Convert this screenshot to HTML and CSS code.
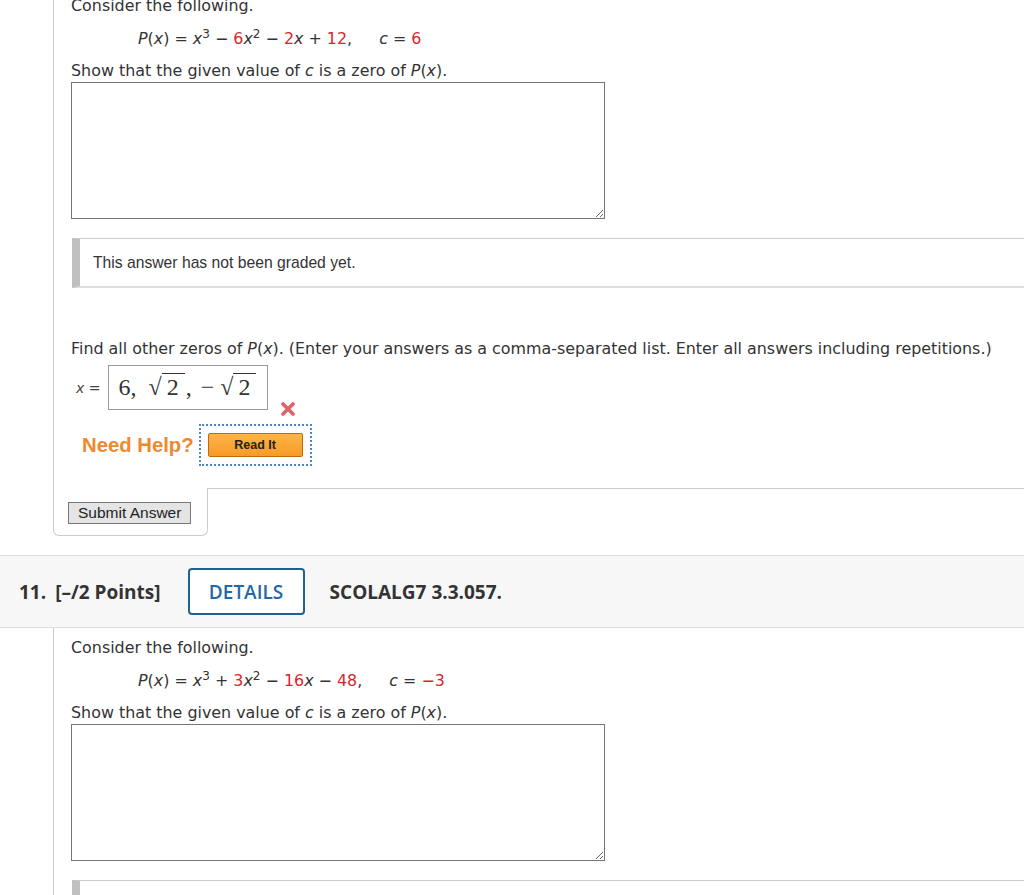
FILE: index.html
```html
<!DOCTYPE html>
<html lang="en">
<head>
    <meta charset="UTF-8">
    <meta name="viewport" content="width=device-width, initial-scale=1.0">
    <title>WebAssign</title>
    <link rel="stylesheet" href="styles.css">
</head>
<body>

    <div class="page">
        <div class="qbody top">
            <p class="intro">Consider the following.</p>
            <p class="eq"><i>P</i>(<i>x</i>) = <i>x</i><sup>3</sup> &minus; <span class="red">6</span><i>x</i><sup>2</sup> &minus; <span class="red">2</span><i>x</i> + <span class="red">12</span>,<span class="cval"><i>c</i> = <span class="red">6</span></span></p>
            <p class="prompt">Show that the given value of <i>c</i> is a zero of <i>P</i>(<i>x</i>).</p>
            <textarea class="work"></textarea>
            <div class="graded">This answer has not been graded yet.</div>

            <p class="prompt find">Find all other zeros of <i>P</i>(<i>x</i>). (Enter your answers as a comma-separated list. Enter all answers including repetitions.)</p>
            <div class="answer-row">
                <span class="xeq"><i>x</i> =</span>
                <span class="mathbox"><span>6,</span><span class="rad">&radic;<span class="under">2</span></span><span class="comma">,</span><span class="neg">&minus;</span><span class="rad">&radic;<span class="under">2</span></span></span>
                <svg class="wrong" width="14" height="14" viewBox="0 0 14 14">
                    <path d="M2 2 L12 12 M12 2 L2 12" stroke="#e5606a" stroke-width="3.6" stroke-linecap="round"/>
                </svg>
            </div>
            <div class="help">
                <span class="need">Need Help?</span>
                <span class="readit-wrap"><button class="readit" type="button">Read It</button></span>
            </div>
        </div>

        <div class="submit-row">
            <div class="submit-cell"><button class="submit" type="button">Submit Answer</button></div>
            <div class="submit-fill"></div>
        </div>

        <div class="qhead">
            <span class="qnum">11.</span>
            <span class="pts">[&ndash;/2 Points]</span>
            <button class="details" type="button">DETAILS</button>
            <span class="code">SCOLALG7 3.3.057.</span>
        </div>

        <div class="qbody second">
            <p class="intro">Consider the following.</p>
            <p class="eq"><i>P</i>(<i>x</i>) = <i>x</i><sup>3</sup> + <span class="red">3</span><i>x</i><sup>2</sup> &minus; <span class="red">16</span><i>x</i> &minus; <span class="red">48</span>,<span class="cval"><i>c</i> = <span class="red">&minus;3</span></span></p>
            <p class="prompt">Show that the given value of <i>c</i> is a zero of <i>P</i>(<i>x</i>).</p>
            <textarea class="work"></textarea>
            <div class="graded"></div>
        </div>
    </div>

</body>
</html>
```

FILE: styles.css
```css
body {
    margin: 0;
    background-color: white;
    color: #333;
    font-family: "DejaVu Sans", Verdana, sans-serif;
    font-size: 15.9px;
}
.page {
    margin-top: -14px;
}
p {
    margin: 0;
}
.red {
    color: #d9262b;
}
.qbody {
    margin-left: 53px;
    border-left: 1px solid #ccc;
    padding-left: 17px;
    padding-top: 10px;
}
.qbody.top {
    padding-bottom: 22px;
}
.intro {
    line-height: 20px;
}
.eq {
    margin-top: 13px;
    margin-left: 67px;
    line-height: 20px;
}
.eq sup {
    font-size: 12px;
    line-height: 0;
}
.cval {
    margin-left: 27px;
}
.prompt {
    margin-top: 12px;
    line-height: 20px;
}
.work {
    display: block;
    width: 534px;
    height: 137px;
    box-sizing: border-box;
    margin-top: 1px;
    border: 1px solid #767676;
    resize: both;
}
.graded {
    margin-top: 19px;
    margin-left: 1px;
    height: 47px;
    border-left: 8px solid #c0c0c0;
    border-top: 1px solid #ccc;
    border-bottom: 2px solid #ddd;
    padding-left: 13px;
    display: flex;
    align-items: center;
    font-family: "Liberation Sans", Arial, sans-serif;
    font-size: 15.7px;
    color: #333;
}
.find {
    margin-top: 51px;
}
.answer-row {
    display: flex;
    align-items: center;
    margin-top: 6px;
}
.xeq {
    margin-left: 5px;
    margin-right: 8px;
    font-size: 14px;
    color: #444;
}
.mathbox {
    width: 160px;
    height: 45px;
    box-sizing: border-box;
    border: 1px solid #999;
    padding-left: 9px;
    display: flex;
    align-items: center;
    font-family: "Liberation Serif", "Times New Roman", serif;
    font-size: 24px;
    color: #333;
    white-space: pre;
}
.rad {
    margin-left: 12px;
}
.under {
    border-top: 1px solid #333;
    padding: 0 6px 0 5px;
}
.comma {
    margin-left: 1px;
}
.neg {
    margin-left: 9px;
}
.neg + .rad {
    margin-left: 6px;
}
.wrong {
    align-self: flex-end;
    margin-left: 13px;
    margin-bottom: -6px;
}
.help {
    display: flex;
    align-items: center;
    margin-top: 14px;
    margin-left: 11px;
}
.need {
    font-family: "Liberation Sans", Arial, sans-serif;
    font-weight: bold;
    font-size: 20.3px;
    color: #f0892e;
    margin-right: 5px;
}
.readit-wrap {
    border: 2px dotted #4f86c0;
    padding: 7px 7px;
}
.readit {
    display: block;
    width: 95px;
    height: 24px;
    background: linear-gradient(#fcb54a, #f79a26);
    border: 1px solid #c06a0c;
    border-radius: 2px;
    font-family: "Liberation Sans", Arial, sans-serif;
    font-weight: bold;
    font-size: 12.5px;
    color: #222;
    padding: 0;
}
.submit-row {
    display: flex;
}
.submit-cell {
    margin-left: 53px;
    width: 155px;
    height: 48px;
    border: 1px solid #ccc;
    border-top: none;
    border-radius: 0 0 6px 6px;
    padding: 14px 0 0 14px;
    box-sizing: border-box;
}
.submit-fill {
    flex: 1;
    border-top: 1px solid #ccc;
}
.submit {
    background-color: #e4e4e4;
    border: 1px solid #777;
    border-radius: 0;
    font-family: "Liberation Sans", Arial, sans-serif;
    font-size: 15.5px;
    color: #222;
    padding: 1px 9px;
    height: 22px;
}
.qhead {
    margin-top: 19px;
    height: 73px;
    box-sizing: border-box;
    background-color: #f7f7f7;
    border-top: 1px solid #ddd;
    border-bottom: 1px solid #ddd;
    display: flex;
    align-items: center;
    padding-left: 19px;
    font-family: "Open Sans", sans-serif;
    font-weight: bold;
    font-size: 19px;
    color: #333;
}
.pts {
    margin-left: 9px;
}
.details {
    margin-left: 27px;
    width: 117px;
    height: 47px;
    background-color: white;
    border: 2px solid #22608f;
    border-radius: 4px;
    font-family: "Open Sans", sans-serif;
    font-weight: 600;
    font-size: 19px;
    color: #1f6aa6;
}
.code {
    margin-left: 25px;
}
```
